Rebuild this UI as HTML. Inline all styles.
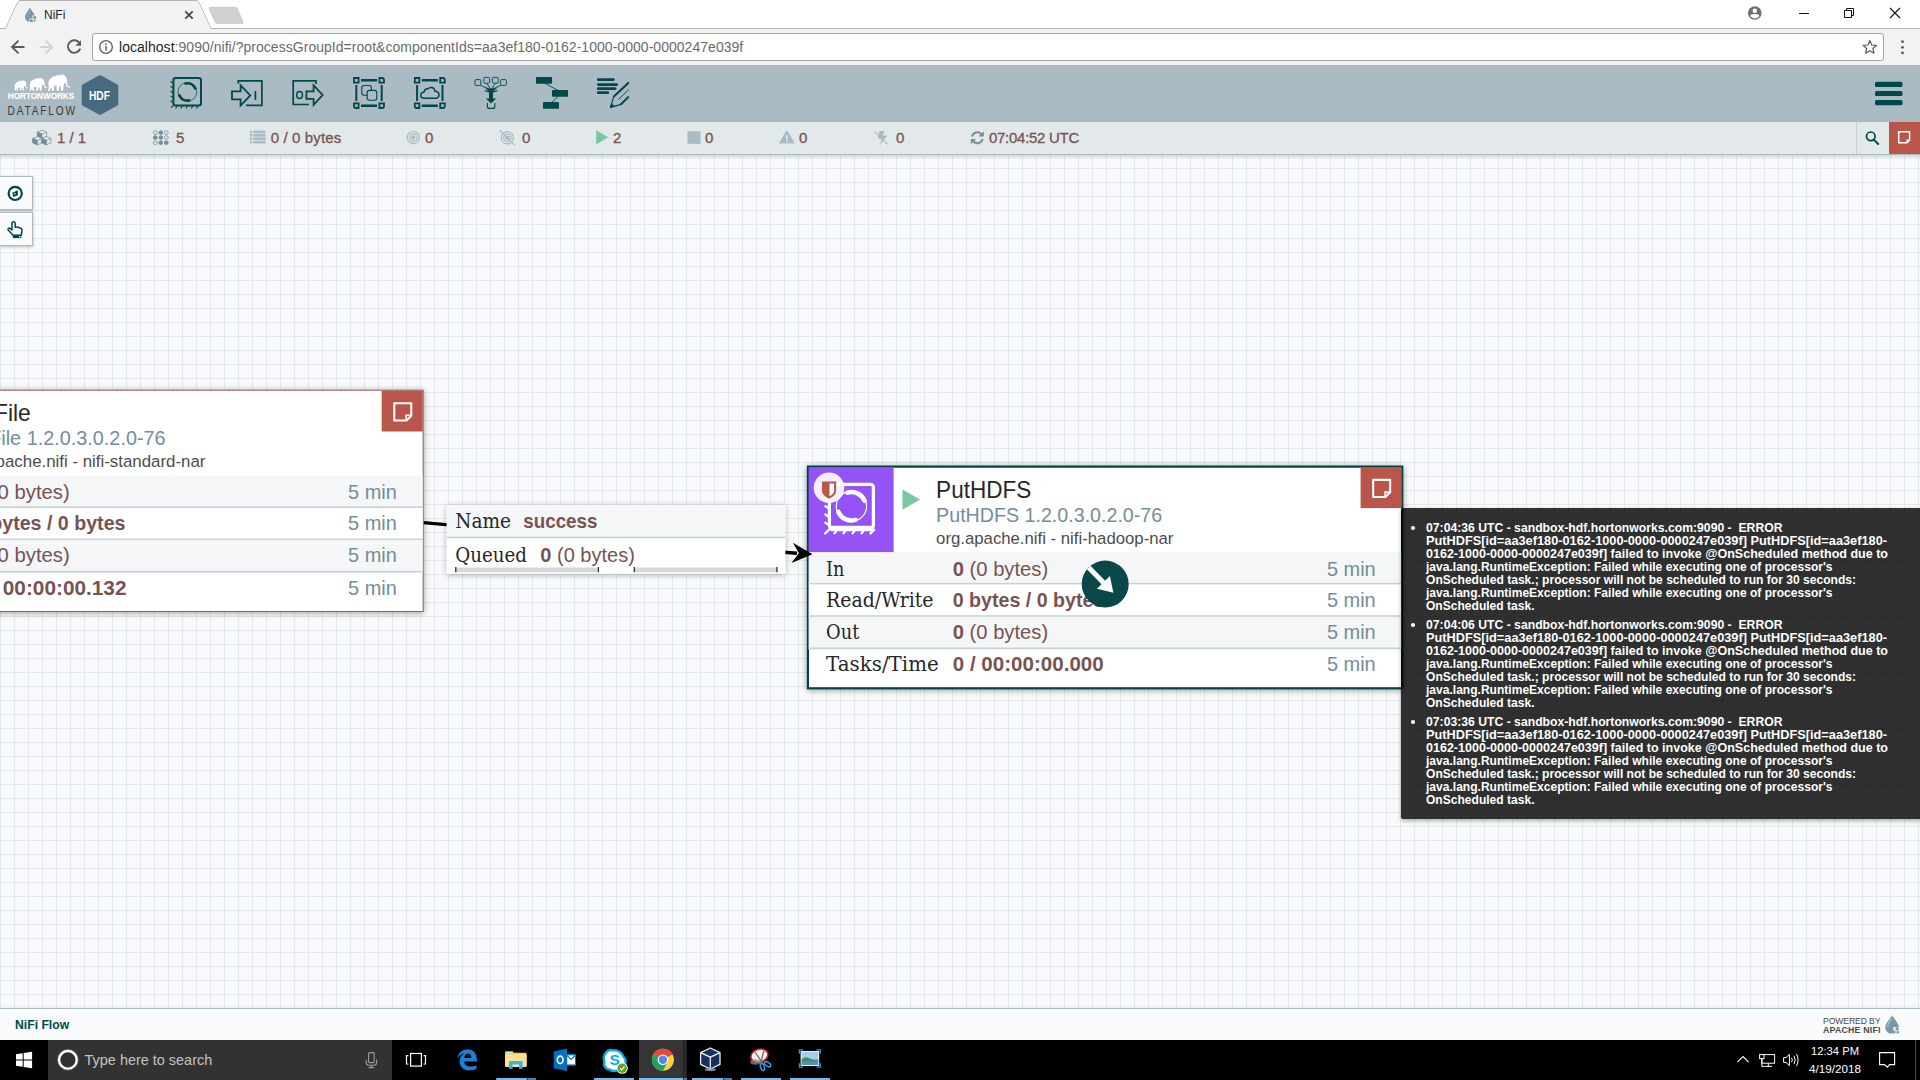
<!DOCTYPE html>
<html lang="en">
<head>
<meta charset="utf-8">
<title>NiFi</title>
<style>
*{box-sizing:border-box;margin:0;padding:0}
html,body{width:1920px;height:1080px;overflow:hidden;background:#fff;font-family:"Liberation Sans",sans-serif}
.abs{position:absolute}
#root{position:absolute;left:0;top:0;width:1920px;height:1080px;overflow:hidden}
/* browser chrome */
#titlebar{left:0;top:0;width:1920px;height:29px;background:#fff}
#toolbar{left:0;top:29px;width:1920px;height:37px;background:#f2f2f2;border-bottom:1px solid #b6b4b6}
#urlbox{left:92px;top:33px;width:1792px;height:28px;background:#fff;border:1px solid #a6a6a6;border-radius:3px}
#url{left:119px;top:39px;font-size:14px;line-height:16px;color:#6b6b6b;white-space:nowrap;letter-spacing:0.035px}
#url b{font-weight:normal;color:#1f1f1f}
#tabtitle{left:44px;top:7px;font-size:12px;line-height:16px;color:#1f1f1f}
/* nifi header */
#header{left:0;top:66px;width:1920px;height:56px;background:#aabbc3}
#status{left:0;top:122px;width:1920px;height:33px;background:#e3e8eb;border-bottom:1px solid #aabbc3}
.st{top:129px;font-size:15px;line-height:18px;color:#775351;white-space:nowrap;-webkit-text-stroke:0.3px #775351}
#canvas{left:0;top:155px;width:1920px;height:885px;background-color:#f9fafb;
 background-image:linear-gradient(to right,#e4e9ec 1px,transparent 1px),linear-gradient(to bottom,#e4e9ec 1px,transparent 1px);
 background-size:14px 14px;background-position:0 -1px}
#topshadow{left:0;top:155px;width:1920px;height:5px;background:linear-gradient(to bottom,rgba(0,0,0,.14),rgba(0,0,0,0))}
#crumbs{left:0;top:1008px;width:1920px;height:32px;background:rgba(249,250,251,.96);border-top:1px solid #aabbc3;box-shadow:0 -2px 4px rgba(0,0,0,.05)}
#crumbtxt{left:15px;top:1017px;font-size:12.2px;line-height:16px;font-weight:bold;color:#004849;white-space:nowrap}
#taskbar{left:0;top:1040px;width:1920px;height:40px;background:#000}
/* tooltip */
#tip{left:1401px;top:508px;width:521px;height:310.500px;background:rgba(0,0,0,.808);border-radius:2px;box-shadow:0 2px 4px rgba(0,0,0,.3)}
#tip ul{position:absolute;left:0;top:0;list-style:none}
#tip li{position:absolute;left:25px;width:480px;font-size:12.2px;line-height:13px;font-weight:bold;color:#fff;white-space:nowrap}
#tip li i{position:absolute;left:-15px;top:4px;width:5px;height:5px;border-radius:50%;background:#fff}
</style>
</head>
<body>
<div id="root">

<div id="titlebar" class="abs"></div>
<div id="toolbar" class="abs"></div>
<svg class="abs" style="left:0;top:0" width="1920" height="66" viewBox="0 0 1920 66">
 <path d="M0 28.5H5.5L18 1.6Q18.6 0.5 20 0.5H196.5Q197.9 0.5 198.5 1.6L211 28.5H1920" fill="none" stroke="#b3b1b3" stroke-width="1"/>
 <path d="M5.8 29L18.3 1.8Q18.8 1 20 1H196.5Q197.7 1 198.2 1.8L210.7 29Z" fill="#f2f2f2"/>
 <path d="M210.2 7.3H235.5Q236.6 7.3 237.1 8.3L242.9 21.6Q243.6 23.6 241.6 23.6H217Q215.8 23.6 215.3 22.6L209.2 9Q208.6 7.3 210.2 7.3Z" fill="#d0d0d0" stroke="#bdbdbd" stroke-width=".6"/>
 <path d="M185.3 11.3l7.4 7.4M192.7 11.3l-7.4 7.4" stroke="#454545" stroke-width="1.7" fill="none"/>
 <!-- favicon drop -->
 <path d="M29.800 7.400C32 11.500 34.800 13.600 35 16.800C35.200 19.800 33 21.800 30 21.800C27 21.800 24.800 19.700 25 16.800C25.300 13.400 28.200 11.200 29.800 7.400Z" fill="#7a97a6"/>
 <path d="M27 17.600C27.200 15 28.800 13.200 30 10.800" fill="none" stroke="#a9bcc6" stroke-width=".8"/>
 <path d="M32.400 15.600H37V23H29.400V18.600H32.400Z" fill="#f2f2f2"/>
 <rect x="33.200" y="16.200" width="2.900" height="2.700" fill="#7a97a6"/><rect x="30" y="19.300" width="2.800" height="2.700" fill="#7a97a6"/><path d="M33.800 19.800H36.400L34.600 22H33.800Z" fill="#7a97a6"/>
 <!-- nav arrows -->
 <path d="M24.5 47H12.5M18.5 40.6L12 47L18.5 53.4" stroke="#5a5a5a" stroke-width="1.9" fill="none"/>
 <path d="M39.5 47H51.5M45.5 40.6L52 47L45.5 53.4" stroke="#d2d2d2" stroke-width="1.9" fill="none"/>
 <path d="M79.6 43.2A6.3 6.3 0 1 0 80.2 48.6" stroke="#5a5a5a" stroke-width="1.9" fill="none"/>
 <path d="M81 40.2V45.8H75.4Z" fill="#5a5a5a"/>
 <!-- info icon -->
 <circle cx="106" cy="47" r="6.3" fill="none" stroke="#5a5a5a" stroke-width="1.3"/>
 <rect x="105.3" y="46" width="1.5" height="4.6" fill="#5a5a5a"/><rect x="105.3" y="43.3" width="1.5" height="1.6" fill="#5a5a5a"/>
 <!-- star -->
 <path d="M1869.8 40.6l1.9 4.4 4.8 .4-3.6 3.1 1.1 4.7-4.2-2.5-4.2 2.5 1.1-4.7-3.6-3.1 4.8-.4z" fill="none" stroke="#5a5a5a" stroke-width="1.2" stroke-linejoin="round"/>
 <circle cx="1902.5" cy="41.7" r="1.4" fill="#5a5a5a"/><circle cx="1902.5" cy="47.3" r="1.4" fill="#5a5a5a"/><circle cx="1902.5" cy="52.9" r="1.4" fill="#5a5a5a"/>
 <!-- window controls -->
 <circle cx="1754.8" cy="13" r="6.8" fill="#6f6f6f"/>
 <circle cx="1754.8" cy="10.8" r="2.3" fill="#fff"/>
 <path d="M1750.3 16.3Q1750.3 13.9 1754.8 13.9Q1759.3 13.9 1759.3 16.3Q1757.6 18.4 1754.8 18.4Q1752 18.4 1750.3 16.3Z" fill="#fff"/>
 <path d="M1799 13.5H1809" stroke="#111" stroke-width="1"/>
 <path d="M1844.5 10.5H1851.5V17.5H1844.5ZM1846.5 10.5V8.5H1853.5V15.5H1851.5" stroke="#111" stroke-width="1" fill="none"/>
 <path d="M1890 8L1900 18M1900 8L1890 18" stroke="#111" stroke-width="1.1"/>
</svg>
<div id="urlbox" class="abs"></div>
<svg class="abs" style="left:92px;top:33px" width="40" height="28" viewBox="92 33 40 28">
 <circle cx="106" cy="47" r="6.3" fill="none" stroke="#5a5a5a" stroke-width="1.3"/>
 <rect x="105.3" y="46" width="1.5" height="4.6" fill="#5a5a5a"/><rect x="105.3" y="43.3" width="1.5" height="1.6" fill="#5a5a5a"/>
</svg>
<svg class="abs" style="left:1855px;top:35px" width="28" height="24" viewBox="1855 35 28 24">
 <path d="M1869.8 40.6l1.9 4.4 4.8 .4-3.6 3.1 1.1 4.7-4.2-2.5-4.2 2.5 1.1-4.7-3.6-3.1 4.8-.4z" fill="none" stroke="#5a5a5a" stroke-width="1.2" stroke-linejoin="round"/>
</svg>
<div id="tabtitle" class="abs">NiFi</div>
<div id="url" class="abs"><b>localhost</b>:9090/nifi/?processGroupId=root&amp;componentIds=aa3ef180-0162-1000-0000-0000247e039f</div>


<div id="header" class="abs"></div>
<svg class="abs" style="left:0;top:65px" width="1920" height="57" viewBox="0 65 1920 57">
 <!-- hortonworks logo -->
 <defs>
  <path id="eleph" d="M3 45C3 25 12 12 30 7C40 3 50 2 58 3C62 0 72 0 78 6C85 12 86 22 87 32C88 42 89 50 93 52C96 53 99 51 100 53C99 58 92 60 88 56C83 50 82 42 80 36L76 38C74 42 72 46 71 50L69 72L60 72L59 56L53 50L50 72L41 72L40 51C35 51 30 50 27 49L29 72L20 72L17 56L10 72L2 72L6 52Z"/>
 </defs>
 <use href="#eleph" fill="#fff" transform="translate(14,80.4) scale(.141,.142)"/>
 <use href="#eleph" fill="#fff" transform="translate(29.1,77.9) scale(.178,.177)"/>
 <use href="#eleph" fill="#fff" transform="translate(47.6,74.6) scale(.224,.223)"/>
 <text x="7.8" y="98.5" font-family="Liberation Sans, sans-serif" font-weight="bold" font-size="8.200" fill="#fff" stroke="#fff" stroke-width=".15" textLength="66.400" lengthAdjust="spacingAndGlyphs">HORTONWORKS</text>
 <text x="0" y="0" font-family="Liberation Sans, sans-serif" font-size="13" fill="#3a3a3a" textLength="86.6" lengthAdjust="spacing" transform="translate(7.5,114.9) scale(.78,1)">DATAFLOW</text>
 <polygon points="100,77.5 116,86.3 116,103.7 100,112.5 84,103.7 84,86.3" fill="#466a80" stroke="#466a80" stroke-width="4.6" stroke-linejoin="round"/>
 <text x="88.9" y="99.8" font-family="Liberation Sans, sans-serif" font-weight="bold" font-size="13.5" fill="#fff" textLength="21" lengthAdjust="spacingAndGlyphs">HDF</text>
 
 <g fill="none" stroke="#004849" stroke-linecap="butt" stroke-linejoin="miter">
  <!-- processor -->
  <rect x="173.4" y="78.1" width="27.6" height="27.4" rx="2.2" stroke-width="2"/>
  <path d="M170.6 81.5l2 1.6M170.6 86.3l2 1.6M170.6 91.1l2 1.6M170.6 95.9l2 1.6M170.6 100.7l2 1.6M171 107.6l2.4-2.2M175.6 108.4l1.6-2.4M180.8 108.4l1.6-2.4M186 108.4l1.6-2.4M191.2 108.4l1.6-2.4M196.4 108.4l1.6-2.4" stroke-width="1.1"/>
  <circle cx="187.3" cy="91.9" r="9.4" stroke-width=".7"/>
  <path d="M185.500 83.500A8.600 8.600 0 0 1 195.200 88.300" stroke-width="2.800" stroke-linecap="round"/>
  <path d="M189.100 100.300A8.600 8.600 0 0 1 179.400 95.500" stroke-width="2.800" stroke-linecap="round"/>
  <!-- input port -->
  <path d="M238.3 83.6V80.9H261.9V105.4H246" stroke-width="1.7"/>
  <path d="M232 91.4H240.6V85.3L250.3 95.4L240.6 105.6V99.4H232Z" stroke-width="1.8" fill="#aabbc3"/>
  <path d="M255.4 91V100" stroke-width="1.7"/>
  <!-- output port -->
  <path d="M316 84V80.9H293.2V104.5H309" stroke-width="1.7"/>
  <ellipse cx="299.6" cy="95" rx="2.9" ry="3.5" stroke-width="1.5"/>
  <path d="M306.4 91.3H313.6V85.2L322.6 95L313.6 104.9V98.8H306.4Z" stroke-width="1.8" fill="#aabbc3"/>
  <!-- group -->
  <g id="frame">
   <path d="M354 78h4.6v4.6h-4.6zM379.4 78H382Q384 78 384 80v2.6h-4.6zM354 103.4h4.6V108H356Q354 108 354 106zM379.4 103.4H384V106Q384 108 382 108h-2.6z" stroke-width="1.8"/>
   <path d="M361 80.3h16M361 105.7h16" stroke-width="2.6"/>
   <path d="M356.3 85v16M381.7 85v16" stroke-width="2"/>
  </g>
  <rect x="361.8" y="85.5" width="9.6" height="9.8" rx="2.2" stroke-width="1.1"/>
  <rect x="367.2" y="90.4" width="9.6" height="9.8" rx="2.2" stroke-width="1.1" fill="#aabbc3"/>
  <!-- remote group -->
  <use href="#frame" x="60.8"/>
  <path d="M424.5 98.2Q420.8 98.2 420.8 95.2Q420.8 92.4 424 92Q424.6 88.6 428 88.8Q429.6 87 432 87.6Q434.6 88.2 435 91.2Q439 91.4 439 94.8Q439 98.2 435.4 98.2Z" stroke-width="1.5"/>
  <!-- funnel -->
  <g stroke-width=".9">
   <rect x="475" y="79.6" width="5.8" height="5.8" rx="1"/><rect x="483.8" y="77.4" width="5.8" height="5.8" rx="1"/><rect x="492.4" y="77.4" width="5.8" height="5.8" rx="1"/><rect x="500.6" y="79.6" width="5.8" height="5.8" rx="1"/>
   <path d="M480.6 85.4L488.2 88.6M486.8 83.2L489.8 88M495.2 83.2L492.4 88M500.8 85.4L493.8 88.6"/>
   <path d="M484.8 90.6Q491 93.6 497.4 90.6" stroke-width="1.1"/>
  </g>
  <path d="M485.2 88.2H497L493 91.6V98.6H496.2L491 103.6L485.8 98.6H489V91.6Z" fill="#004849" stroke="none"/>
  <path d="M487.4 103V106.4Q487.4 108.4 489.4 108.4H492.8Q494.8 108.4 494.8 106.4V103" stroke-width="1.1"/>
  <!-- template -->
  <g stroke="none" fill="#004849"><rect x="536" y="77" width="16" height="6.7" rx=".8"/><rect x="552" y="90.1" width="16" height="6.7" rx=".8"/><rect x="543" y="102" width="16" height="6.7" rx=".8"/></g>
  <path d="M545 83.4L558 90.4M558 96.6L552 102.2" stroke-width=".9"/>
  <!-- label -->
  <path d="M598.2 79.6H613.4M598.2 84.6H616.8M598.2 88.7H615.2M598.2 92.7H607.8" stroke-width="2.7" stroke-linecap="round"/>
  <path d="M628.8 82.4L613.6 96.8L610.6 107.2L620.6 104.6L628.8 96.6" stroke-width="1.2"/>
  <path d="M628.8 82.4L613.6 96.8" stroke-width="2"/>
  <path d="M628.8 96.6L620.6 104.6" stroke-width="2"/>
  <path d="M628.8 89.4L618.4 99.6" stroke-width=".9"/>
  <path d="M611.6 103.8L610.4 107.4L614.4 106.4Z" fill="#004849" stroke-width="1"/>
 </g>

 <!-- hamburger -->
 <rect x="1875" y="81.8" width="27.5" height="5.2" rx="1.6" fill="#004849"/>
 <rect x="1875" y="90.9" width="27.5" height="5.2" rx="1.6" fill="#004849"/>
 <rect x="1875" y="100" width="27.5" height="5.2" rx="1.6" fill="#004849"/>
</svg>


<div id="status" class="abs"></div>
<svg class="abs" style="left:0;top:122px" width="1920" height="33" viewBox="0 122 1920 33">
 <!-- cubes -->
 <g stroke="#728e9b" stroke-width=".7" stroke-linejoin="round">
  <path d="M42 130.2l4.6 1.9v4.4l-4.6 2.1-4.6-2.1v-4.4z" fill="#e3e8eb"/><path d="M37.4 132.1v4.4l4.6 2.1v-4.5z" fill="#728e9b"/><path d="M37.400 132.1L42 134.100L46.600 132.100" fill="none"/>
  <path d="M37.400 136.500l4.600 1.900v4.400l-4.600 2.100-4.600-2.100v-4.400z" fill="#e3e8eb"/><path d="M32.800 138.400v4.400l4.600 2.100v-4.500z" fill="#728e9b"/><path d="M32.800 138.400l4.600 2l4.600-2" fill="none"/>
  <path d="M46.400 136.500l4.600 1.900v4.400l-4.600 2.100-4.600-2.100v-4.400z" fill="#e3e8eb"/><path d="M41.800 138.400v4.400l4.600 2.100v-4.500z" fill="#728e9b"/><path d="M41.800 138.400l4.600 2l4.600-2" fill="none"/>
 </g>
 <!-- dots -->
 <g stroke="#728e9b" stroke-width=".8">
  <circle cx="155.300" cy="132.600" r="1.900" fill="none"/><circle cx="160.800" cy="132.600" r="1.900" fill="#728e9b"/><circle cx="166.300" cy="132.600" r="1.900" fill="none"/>
  <circle cx="155.300" cy="137.600" r="1.900" fill="#728e9b"/><circle cx="160.800" cy="137.600" r="1.900" fill="#728e9b"/><circle cx="166.300" cy="137.600" r="1.900" fill="none"/>
  <circle cx="155.300" cy="142.700" r="1.900" fill="none"/><circle cx="160.800" cy="142.700" r="1.900" fill="#728e9b"/><circle cx="166.300" cy="142.700" r="1.900" fill="#728e9b"/>
 </g>
 <!-- list -->
 <g fill="#aabbc3"><rect x="250" y="130.600" width="2.200" height="2.600"/><rect x="253.200" y="130.600" width="12.400" height="2.600"/><rect x="250" y="134" width="2.200" height="2.600"/><rect x="253.200" y="134" width="12.400" height="2.600"/><rect x="250" y="137.400" width="2.200" height="2.600"/><rect x="253.200" y="137.400" width="12.400" height="2.600"/><rect x="250" y="140.800" width="2.200" height="2.600"/><rect x="253.200" y="140.800" width="12.400" height="2.600"/></g>
 <!-- targets -->
 <g fill="none" stroke="#aabbc3" stroke-width="1.200"><circle cx="413.300" cy="137.600" r="6.100"/><circle cx="413.300" cy="137.600" r="3.700"/><circle cx="413.300" cy="137.600" r="1.500" fill="#aabbc3"/></g>
 <g fill="none" stroke="#aabbc3" stroke-width="1.200"><circle cx="507.300" cy="137.800" r="6.100"/><circle cx="507.300" cy="137.800" r="3.700"/><circle cx="507.300" cy="137.800" r="1.500" fill="#aabbc3"/><path d="M499.800 130.300L514.600 145" stroke-width="1.300"/></g>
 <path d="M596.200 130.200L608.300 137.300L596.200 144.400Z" fill="#7dc7a0"/>
 <rect x="687.500" y="131.300" width="13" height="12.500" fill="#aabbc3"/>
 <path d="M786.800 130.900Q787.500 130.900 787.900 131.600L794.300 142.400Q794.800 143.600 793.600 143.600H780Q778.800 143.600 779.300 142.400L785.700 131.600Q786.100 130.900 786.800 130.900Z" fill="#aabbc3"/>
 <rect x="786" y="135" width="1.700" height="4.600" fill="#e3e8eb"/><rect x="786" y="140.600" width="1.700" height="1.700" fill="#e3e8eb"/>
 <path d="M879.500 131H884.500L882.800 135.600H887.200L880 145L881.600 138.600H877.600Z" fill="#aabbc3"/>
 <path d="M874.300 131.600L887.600 144.300" stroke="#aabbc3" stroke-width="1.100"/>
 <!-- refresh -->
 <g fill="none" stroke="#728e9b" stroke-width="2"><path d="M972 136.500A5.400 5.400 0 0 1 981.200 134"/><path d="M982.600 139A5.400 5.400 0 0 1 973.400 141.500"/></g>
 <path d="M983.800 131.300V136.600H978.500Z" fill="#728e9b"/><path d="M970.800 144.200V138.900H976.100Z" fill="#728e9b"/>
 <!-- search + bulletin -->
 <rect x="1856" y="122" width="1" height="32" fill="#c7d2d7"/>
 <circle cx="1870.800" cy="136.300" r="4.300" fill="none" stroke="#004849" stroke-width="1.700"/><path d="M1873.800 139.600L1878.200 144" stroke="#004849" stroke-width="2" stroke-linecap="round"/>
 <rect x="1889" y="122" width="31" height="32" fill="#ba554a"/>
 <path d="M1898.700 131.700H1909.600V140.200L1907 142.800H1898.700Z" fill="none" stroke="#fff" stroke-width="1.500" stroke-linejoin="round"/><path d="M1909.600 140.200H1907V142.800" fill="none" stroke="#fff" stroke-width="1.200"/>
</svg>
<div class="abs st" style="left:57px">1 / 1</div>
<div class="abs st" style="left:176px">5</div>
<div class="abs st" style="left:270.800px;letter-spacing:.12px">0 / 0 bytes</div>
<div class="abs st" style="left:425px">0</div>
<div class="abs st" style="left:522px">0</div>
<div class="abs st" style="left:613px">2</div>
<div class="abs st" style="left:705px">0</div>
<div class="abs st" style="left:799px">0</div>
<div class="abs st" style="left:896px">0</div>
<div class="abs st" style="left:989px;letter-spacing:-.28px">07:04:52 UTC</div>

<!--CANVAS_START-->
<div id="canvas" class="abs"></div>
<svg class="abs" style="left:0;top:155px" width="1920" height="853" viewBox="0 155 1920 853">
 <defs>
  <filter id="ds" x="-10%" y="-10%" width="120%" height="130%"><feDropShadow dx="0" dy="0.600" stdDeviation="1.800" flood-color="#000" flood-opacity=".38"/></filter>
  <filter id="ds2" x="-10%" y="-20%" width="120%" height="150%"><feDropShadow dx="0" dy="0.600" stdDeviation="1.800" flood-color="#000" flood-opacity=".3"/></filter>
 </defs>

<path d="M423.500 522.600L616.500 540L797 553.200" fill="none" stroke="#000" stroke-width="3.400"/>
<g transform="translate(446.800,505.300) scale(1.7)">
 <rect x="0" y="0" width="199.100" height="40.300" fill="#fff" filter="url(#ds2)"/>
 <rect x="0" y="0" width="199.100" height="19" fill="#f4f6f7"/><rect x="0" y="18.400" width="199.100" height="1" fill="#c7d2d7"/>
 <text x="5" y="13.500" font-family="DejaVu Serif, Liberation Serif, serif" font-size="11.600" fill="#262626" textLength="32.800" lengthAdjust="spacingAndGlyphs">Name</text>
 <text x="45" y="13.500" font-family="Liberation Sans, sans-serif" font-size="12" font-weight="bold" fill="#775351" textLength="43.600" lengthAdjust="spacingAndGlyphs">success</text>
 <text x="5" y="33.100" font-family="DejaVu Serif, Liberation Serif, serif" font-size="11.600" fill="#262626" textLength="42.200" lengthAdjust="spacingAndGlyphs">Queued</text>
 <text x="55" y="33.100" font-family="Liberation Sans, sans-serif" font-size="12" fill="#775351" textLength="55.600" lengthAdjust="spacingAndGlyphs"><tspan font-weight="bold">0</tspan> (0 bytes)</text>
 <rect x="5" y="36.600" width="84.500" height="2.800" fill="#d8d8d8"/><rect x="110" y="36.600" width="84.500" height="2.800" fill="#d8d8d8"/>
 <path d="M5.300 36.300v3.100M89.200 36.300v3.100M110.300 36.300v3.100M194.200 36.300v3.100" stroke="#262626" stroke-width=".7"/>
</g>

<g transform="translate(-170.3,390.7) scale(1.7)">
<rect x="-0.3" y="-0.3" width="349.400" height="130.200" fill="#fff" stroke="#8e5b58" stroke-width=".6" filter="url(#ds)"/>
<rect x="0" y="50" width="348.800" height="19" fill="#f4f6f7"/><rect x="0" y="68" width="348.800" height="1" fill="#c7d2d7"/>
<rect x="0" y="69" width="348.800" height="19" fill="#fff"/><rect x="0" y="87" width="348.800" height="1" fill="#c7d2d7"/>
<rect x="0" y="88" width="348.800" height="19" fill="#f4f6f7"/><rect x="0" y="106" width="348.800" height="1" fill="#c7d2d7"/>
<rect x="324.700" y="0" width="24.100" height="24" fill="#ba554a"/>
<path d="M332.100 7.400H342.100V14.700L339.300 17.500H332.100Z" fill="none" stroke="#fff" stroke-width="1.200" stroke-linejoin="round"/><path d="M342.100 14.500H339.100V17.500" fill="none" stroke="#fff" stroke-width=".9"/>
<text x="75" y="18" font-family="Liberation Sans, sans-serif" font-size="14" fill="#262626" textLength="43.30" lengthAdjust="spacingAndGlyphs">GetFile</text>
<text x="75" y="32" font-family="Liberation Sans, sans-serif" font-size="12" fill="#728e9b" textLength="122.60" lengthAdjust="spacingAndGlyphs">GetFile 1.2.0.3.0.2.0-76</text>
<text x="75" y="45" font-family="Liberation Sans, sans-serif" font-size="10.100" fill="#4d4d4d" textLength="146.00" lengthAdjust="spacingAndGlyphs">org.apache.nifi - nifi-standard-nar</text>
<text x="10.3" y="64" font-family="DejaVu Serif, Liberation Serif, serif" font-size="11.6" fill="#262626" textLength="10.80" lengthAdjust="spacingAndGlyphs">In</text>
<text x="84.8" y="64" font-family="Liberation Sans, sans-serif" font-size="12" fill="#775351" textLength="56.40" lengthAdjust="spacingAndGlyphs"><tspan font-weight="bold">0</tspan> (0 bytes)</text>
<text x="304.900" y="64" font-family="Liberation Sans, sans-serif" font-size="12" fill="#728e9b" textLength="28.70" lengthAdjust="spacingAndGlyphs">5 min</text>
<text x="10.3" y="82" font-family="DejaVu Serif, Liberation Serif, serif" font-size="11.6" fill="#262626" textLength="63.20" lengthAdjust="spacingAndGlyphs">Read/Write</text>
<text x="84.8" y="82" font-family="Liberation Sans, sans-serif" font-size="12" fill="#775351" textLength="89.20" lengthAdjust="spacingAndGlyphs"><tspan font-weight="bold">0 bytes / 0 bytes</tspan></text>
<text x="304.900" y="82" font-family="Liberation Sans, sans-serif" font-size="12" fill="#728e9b" textLength="28.70" lengthAdjust="spacingAndGlyphs">5 min</text>
<text x="10.3" y="101" font-family="DejaVu Serif, Liberation Serif, serif" font-size="11.6" fill="#262626" textLength="19.60" lengthAdjust="spacingAndGlyphs">Out</text>
<text x="84.8" y="101" font-family="Liberation Sans, sans-serif" font-size="12" fill="#775351" textLength="56.40" lengthAdjust="spacingAndGlyphs"><tspan font-weight="bold">0</tspan> (0 bytes)</text>
<text x="304.900" y="101" font-family="Liberation Sans, sans-serif" font-size="12" fill="#728e9b" textLength="28.70" lengthAdjust="spacingAndGlyphs">5 min</text>
<text x="10.3" y="120" font-family="DejaVu Serif, Liberation Serif, serif" font-size="11.6" fill="#262626" textLength="66.20" lengthAdjust="spacingAndGlyphs">Tasks/Time</text>
<text x="84.8" y="120" font-family="Liberation Sans, sans-serif" font-size="12" fill="#775351" textLength="89.80" lengthAdjust="spacingAndGlyphs"><tspan font-weight="bold">1 / 00:00:00.132</tspan></text>
<text x="304.900" y="120" font-family="Liberation Sans, sans-serif" font-size="12" fill="#728e9b" textLength="28.70" lengthAdjust="spacingAndGlyphs">5 min</text>
</g>
<g transform="translate(808.6,467.3) scale(1.7)">
<rect x="-0.400" y="-0.400" width="349.600" height="130.400" fill="#fff" stroke="#004244" stroke-width="1.300" filter="url(#ds)"/>
<rect x="0" y="0" width="50" height="50" fill="#9452f7"/>
<rect x="0" y="50" width="348.800" height="19" fill="#f4f6f7"/><rect x="0" y="68" width="348.800" height="1" fill="#c7d2d7"/>
<rect x="0" y="69" width="348.800" height="19" fill="#fff"/><rect x="0" y="87" width="348.800" height="1" fill="#c7d2d7"/>
<rect x="0" y="88" width="348.800" height="19" fill="#f4f6f7"/><rect x="0" y="106" width="348.800" height="1" fill="#c7d2d7"/>
<rect x="324.700" y="0" width="24.100" height="24" fill="#ba554a"/>
<path d="M332.100 7.400H342.100V14.700L339.300 17.500H332.100Z" fill="none" stroke="#fff" stroke-width="1.200" stroke-linejoin="round"/><path d="M342.100 14.500H339.100V17.500" fill="none" stroke="#fff" stroke-width=".9"/>
<text x="75" y="18" font-family="Liberation Sans, sans-serif" font-size="14" fill="#262626" textLength="56.00" lengthAdjust="spacingAndGlyphs">PutHDFS</text>
<text x="75" y="32" font-family="Liberation Sans, sans-serif" font-size="12" fill="#728e9b" textLength="133.00" lengthAdjust="spacingAndGlyphs">PutHDFS 1.2.0.3.0.2.0-76</text>
<text x="75" y="45" font-family="Liberation Sans, sans-serif" font-size="10.100" fill="#4d4d4d" textLength="139.60" lengthAdjust="spacingAndGlyphs">org.apache.nifi - nifi-hadoop-nar</text>
<text x="10.3" y="64" font-family="DejaVu Serif, Liberation Serif, serif" font-size="11.6" fill="#262626" textLength="10.80" lengthAdjust="spacingAndGlyphs">In</text>
<text x="84.8" y="64" font-family="Liberation Sans, sans-serif" font-size="12" fill="#775351" textLength="56.10" lengthAdjust="spacingAndGlyphs"><tspan font-weight="bold">0</tspan> (0 bytes)</text>
<text x="304.900" y="64" font-family="Liberation Sans, sans-serif" font-size="12" fill="#728e9b" textLength="28.70" lengthAdjust="spacingAndGlyphs">5 min</text>
<text x="10.3" y="82" font-family="DejaVu Serif, Liberation Serif, serif" font-size="11.6" fill="#262626" textLength="63.20" lengthAdjust="spacingAndGlyphs">Read/Write</text>
<text x="84.8" y="82" font-family="Liberation Sans, sans-serif" font-size="12" fill="#775351" textLength="89.20" lengthAdjust="spacingAndGlyphs"><tspan font-weight="bold">0 bytes / 0 bytes</tspan></text>
<text x="304.900" y="82" font-family="Liberation Sans, sans-serif" font-size="12" fill="#728e9b" textLength="28.70" lengthAdjust="spacingAndGlyphs">5 min</text>
<text x="10.3" y="101" font-family="DejaVu Serif, Liberation Serif, serif" font-size="11.6" fill="#262626" textLength="19.60" lengthAdjust="spacingAndGlyphs">Out</text>
<text x="84.8" y="101" font-family="Liberation Sans, sans-serif" font-size="12" fill="#775351" textLength="56.10" lengthAdjust="spacingAndGlyphs"><tspan font-weight="bold">0</tspan> (0 bytes)</text>
<text x="304.900" y="101" font-family="Liberation Sans, sans-serif" font-size="12" fill="#728e9b" textLength="28.70" lengthAdjust="spacingAndGlyphs">5 min</text>
<text x="10.3" y="120" font-family="DejaVu Serif, Liberation Serif, serif" font-size="11.6" fill="#262626" textLength="66.20" lengthAdjust="spacingAndGlyphs">Tasks/Time</text>
<text x="84.8" y="120" font-family="Liberation Sans, sans-serif" font-size="12" fill="#775351" textLength="88.80" lengthAdjust="spacingAndGlyphs"><tspan font-weight="bold">0 / 00:00:00.000</tspan></text>
<text x="304.900" y="120" font-family="Liberation Sans, sans-serif" font-size="12" fill="#728e9b" textLength="28.70" lengthAdjust="spacingAndGlyphs">5 min</text>
</g>

<g transform="translate(808.6,467.3) scale(1.7)">
 <!-- processor glyph -->
 <g fill="none" stroke="#fff">
  <rect x="12.250" y="10" width="25.850" height="26" rx="1.800" stroke-width="1.900"/>
  <path d="M13 36H37.400" stroke-width="3.200"/>
  <path d="M9.400 17.600l2.400 1.700M9.400 22.500l2.400 1.700M9.400 27.400l2.400 1.700M9.400 32.300l2.400 1.700M9.300 39.300l3.400-3.200M14.900 39.300l2-2.600M20.200 39.300l2-2.600M25.500 39.300l2-2.600M30.800 39.300l2-2.600M36 39.300l3-3" stroke-width="1.300"/>
  <circle cx="25.200" cy="22.900" r="8.900" stroke-width=".7"/>
  <path d="M22.800 14.900A8.300 8.300 0 0 1 32.900 19.600" stroke-width="2.700" stroke-linecap="round"/>
  <path d="M27.600 30.900A8.300 8.300 0 0 1 17.500 26.200" stroke-width="2.700" stroke-linecap="round"/>
 </g>
 <circle cx="12" cy="12" r="9" fill="#fff" fill-opacity=".9"/>
 <path d="M7.900 8.300H16.200V13.800Q16.200 16.600 12.050 18.500Q7.900 16.600 7.900 13.800Z" fill="#ba554a"/>
 <path d="M12.300 9.500H15V13.700Q15 15.600 12.300 17.100Z" fill="#fff"/>
 <path d="M55.200 13L65.600 19L55.200 25Z" fill="#7dc7a0"/>
</g>
<circle cx="1105.200" cy="584.100" r="23.500" fill="#0a4748"/>
<clipPath id="cc"><circle cx="1105.200" cy="584.100" r="23.500"/></clipPath>
<path d="M1086 564.700L1103.600 582.700" stroke="#fbfcfc" stroke-width="5" clip-path="url(#cc)"/>
<path d="M1109.900 575.900L1113.400 592.800L1096.900 588.700Z" fill="#fbfcfc"/>

<path d="M0 0L-20.400 -10.200L-13.600 0L-20.400 10.200Z" fill="#000" transform="translate(812.500,554.300) rotate(4.100)"/>
</svg>
<div id="topshadow" class="abs"></div>

<div class="abs" style="left:-1px;top:176px;width:34px;height:34px;background:#f9fafb;border:1px solid #aabbc3;box-shadow:0 1px 3px rgba(0,0,0,.25)"></div>
<div class="abs" style="left:-1px;top:212px;width:34px;height:34px;background:#f9fafb;border:1px solid #aabbc3;box-shadow:0 1px 3px rgba(0,0,0,.25)"></div>
<svg class="abs" style="left:0;top:176px" width="34" height="70" viewBox="0 176 34 70">
 <circle cx="15.200" cy="193.400" r="6.600" fill="none" stroke="#004849" stroke-width="2.200"/>
 <path d="M12.300 192.700L17.900 190.300V195.300L13.300 196.900Z" fill="#004849"/><path d="M14.200 192.900L16.300 193.700L14.200 194.700Z" fill="#f9fafb"/>
 <path d="M12 223.400Q12 221.700 13.600 221.700Q15.200 221.700 15.200 223.400V227.300Q16.400 226.500 17.500 227.300Q18.600 227 19.500 228Q20.800 227.800 21.600 229Q22.300 230 21.900 232L21.100 235.300H13.200Q11.500 233.600 8.400 230.300Q7.500 229.300 8.300 228.500Q9.200 227.700 10.300 228.600L12 230Z" fill="#f9fafb" stroke="#004849" stroke-width="1.500" stroke-linejoin="round"/>
 <rect x="12.900" y="235.200" width="8.400" height="2.900" fill="#004849"/><rect x="19" y="236" width="1.400" height="1.300" fill="#f9fafb"/>
</svg>

<!--CANVAS_END-->
<div id="tip" class="abs"></div>
<svg class="abs" style="left:1401px;top:509px" width="519" height="309" viewBox="1401 509 519 309" font-family="Liberation Sans, sans-serif" font-size="12.600" font-weight="bold" fill="#fff">
<circle cx="1413" cy="528.0" r="2.100"/>
<text x="1426" y="532" textLength="356.5" lengthAdjust="spacingAndGlyphs" xml:space="preserve">07:04:36 UTC - sandbox-hdf.hortonworks.com:9090 -  ERROR</text>
<text x="1426" y="545" textLength="461" lengthAdjust="spacingAndGlyphs" xml:space="preserve">PutHDFS[id=aa3ef180-0162-1000-0000-0000247e039f] PutHDFS[id=aa3ef180-</text>
<text x="1426" y="558" textLength="462" lengthAdjust="spacingAndGlyphs" xml:space="preserve">0162-1000-0000-0000247e039f] failed to invoke @OnScheduled method due to</text>
<text x="1426" y="571" textLength="406.5" lengthAdjust="spacingAndGlyphs" xml:space="preserve">java.lang.RuntimeException: Failed while executing one of processor&#39;s</text>
<text x="1426" y="584" textLength="430" lengthAdjust="spacingAndGlyphs" xml:space="preserve">OnScheduled task.; processor will not be scheduled to run for 30 seconds:</text>
<text x="1426" y="597" textLength="406.5" lengthAdjust="spacingAndGlyphs" xml:space="preserve">java.lang.RuntimeException: Failed while executing one of processor&#39;s</text>
<text x="1426" y="610" textLength="108.5" lengthAdjust="spacingAndGlyphs" xml:space="preserve">OnScheduled task.</text>
<circle cx="1413" cy="625.0" r="2.100"/>
<text x="1426" y="629" textLength="356.5" lengthAdjust="spacingAndGlyphs" xml:space="preserve">07:04:06 UTC - sandbox-hdf.hortonworks.com:9090 -  ERROR</text>
<text x="1426" y="642" textLength="461" lengthAdjust="spacingAndGlyphs" xml:space="preserve">PutHDFS[id=aa3ef180-0162-1000-0000-0000247e039f] PutHDFS[id=aa3ef180-</text>
<text x="1426" y="655" textLength="462" lengthAdjust="spacingAndGlyphs" xml:space="preserve">0162-1000-0000-0000247e039f] failed to invoke @OnScheduled method due to</text>
<text x="1426" y="668" textLength="406.5" lengthAdjust="spacingAndGlyphs" xml:space="preserve">java.lang.RuntimeException: Failed while executing one of processor&#39;s</text>
<text x="1426" y="681" textLength="430" lengthAdjust="spacingAndGlyphs" xml:space="preserve">OnScheduled task.; processor will not be scheduled to run for 30 seconds:</text>
<text x="1426" y="694" textLength="406.5" lengthAdjust="spacingAndGlyphs" xml:space="preserve">java.lang.RuntimeException: Failed while executing one of processor&#39;s</text>
<text x="1426" y="707" textLength="108.5" lengthAdjust="spacingAndGlyphs" xml:space="preserve">OnScheduled task.</text>
<circle cx="1413" cy="722.0" r="2.100"/>
<text x="1426" y="726" textLength="356.5" lengthAdjust="spacingAndGlyphs" xml:space="preserve">07:03:36 UTC - sandbox-hdf.hortonworks.com:9090 -  ERROR</text>
<text x="1426" y="739" textLength="461" lengthAdjust="spacingAndGlyphs" xml:space="preserve">PutHDFS[id=aa3ef180-0162-1000-0000-0000247e039f] PutHDFS[id=aa3ef180-</text>
<text x="1426" y="752" textLength="462" lengthAdjust="spacingAndGlyphs" xml:space="preserve">0162-1000-0000-0000247e039f] failed to invoke @OnScheduled method due to</text>
<text x="1426" y="765" textLength="406.5" lengthAdjust="spacingAndGlyphs" xml:space="preserve">java.lang.RuntimeException: Failed while executing one of processor&#39;s</text>
<text x="1426" y="778" textLength="430" lengthAdjust="spacingAndGlyphs" xml:space="preserve">OnScheduled task.; processor will not be scheduled to run for 30 seconds:</text>
<text x="1426" y="791" textLength="406.5" lengthAdjust="spacingAndGlyphs" xml:space="preserve">java.lang.RuntimeException: Failed while executing one of processor&#39;s</text>
<text x="1426" y="804" textLength="108.5" lengthAdjust="spacingAndGlyphs" xml:space="preserve">OnScheduled task.</text>
</svg>

<div id="crumbs" class="abs"></div>
<div id="crumbtxt" class="abs">NiFi Flow</div>
<svg class="abs" style="left:1800px;top:1009px" width="120" height="31" viewBox="1800 1009 120 31">
 <text x="1823" y="1024" font-family="Liberation Sans, sans-serif" font-size="8.600" fill="#4a4a4a" textLength="57.500" lengthAdjust="spacing">POWERED BY</text>
 <text x="1823" y="1033" font-family="Liberation Sans, sans-serif" font-size="8.800" font-weight="bold" fill="#4a4a4a" textLength="57.500" lengthAdjust="spacing">APACHE NIFI</text>
 <path d="M1892 1015.200C1894.800 1020 1898.600 1022.800 1898.800 1027C1899 1031 1896 1033.600 1892 1033.600C1888 1033.600 1885.200 1031 1885.400 1027C1885.600 1022.600 1889.800 1020 1892 1015.200Z" fill="#7a97a6"/>
 <path d="M1887.600 1027C1887.800 1024 1889.800 1021.600 1891.400 1019" fill="none" stroke="#c3d0d6" stroke-width=".9"/>
 <rect x="1893.400" y="1027" width="6.600" height="7" fill="#f9fafb"/>
 <rect x="1895.600" y="1027.400" width="3" height="3" fill="#7a97a6"/><rect x="1892.600" y="1030.600" width="2.800" height="2.800" fill="#7a97a6"/><rect x="1896.600" y="1031.200" width="2.400" height="2.200" fill="#7a97a6"/>
</svg>
<div id="taskbar" class="abs"></div>

<svg class="abs" style="left:0;top:1040px" width="1920" height="40" viewBox="0 1040 1920 40">
 <rect x="48" y="1040" width="344" height="40" fill="#323232"/>
 <!-- windows logo -->
 <path d="M16 1054.200L22.700 1053.200V1059.500H16ZM23.700 1053.100L32.100 1051.800V1059.500H23.700ZM16 1060.500H22.700V1066.800L16 1065.800ZM23.700 1060.500H32.100V1068.200L23.700 1066.900Z" fill="#fff"/>
 <circle cx="67.900" cy="1059.800" r="8.800" fill="none" stroke="#fff" stroke-width="2.400"/>
 <circle cx="67.900" cy="1059.800" r="10.300" fill="none" stroke="#fff" stroke-opacity=".35" stroke-width=".9"/>
 <text x="84.600" y="1065.200" font-family="Liberation Sans, sans-serif" font-size="14.800" fill="#c4c4c4" textLength="127.600" lengthAdjust="spacingAndGlyphs">Type here to search</text>
 <!-- mic -->
 <g fill="none" stroke="#9b9b9b" stroke-width="1.100"><rect x="368.600" y="1052.600" width="5.600" height="10" rx="1"/><path d="M366.200 1059.600V1062.400Q366.200 1065.200 369 1065.200H373.800Q376.600 1065.200 376.600 1062.400V1059.600M371.400 1065.200V1067.600M368.600 1067.600H374.200"/></g>
 <!-- task view -->
 <g fill="none" stroke="#fff" stroke-width="1.200"><rect x="410.600" y="1053.500" width="10.800" height="12.600"/><path d="M408.400 1055.600H406.500V1064H408.400M423.600 1055.600H425.500V1064H423.600"/></g>
 <!-- edge -->
 <path d="M457.600 1058.200C458.200 1052.800 462.400 1049.200 467.400 1049.200C473.400 1049.200 477 1053.400 476.800 1059.600V1061.600H464.200C464.400 1065.200 467.200 1066.600 470.400 1066.600C472.800 1066.600 474.800 1066 476.400 1065V1068.800C474.600 1069.800 472.200 1070.400 469.400 1070.400C463.400 1070.400 459.600 1066.800 459.600 1061.200C459.600 1057.600 461.600 1054.800 464.600 1053.400C461.600 1053.800 459 1055.600 457.600 1058.200ZM464.400 1058H471.400C471.400 1055.200 470 1053.600 467.800 1053.600C465.800 1053.600 464.600 1055.400 464.400 1058Z" fill="#1b80d6"/>
 <!-- explorer -->
 <path d="M505 1052.400Q505 1051.200 506.200 1051.200H512.600L514 1052.800H525.400Q526.600 1052.800 526.600 1054V1066H505Z" fill="#f4c95f"/>
 <rect x="505" y="1054.200" width="21.600" height="12.800" rx=".8" fill="#fbe293"/>
 <path d="M509 1068.800V1062.400Q509 1061 510.400 1061H521.200Q522.600 1061 522.600 1062.400V1068.800H519V1064.400H512.600V1068.800Z" fill="#3eb2e8"/>
 <rect x="506.600" y="1052" width="4.600" height="1.200" fill="#cfe9f7"/>
 <!-- outlook -->
 <path d="M553.800 1051.400L567 1048.600V1071L553.800 1068.200Z" fill="#0072c6"/>
 <rect x="566" y="1054" width="10" height="11.800" fill="#0072c6"/>
 <path d="M567.200 1055.400H575V1064.400H567.200Z" fill="#fff"/><path d="M567.200 1055.600L571.100 1059.400L575 1055.600" fill="none" stroke="#0072c6" stroke-width="1.300"/>
 <ellipse cx="560.200" cy="1059.800" rx="2.900" ry="3.700" fill="none" stroke="#fff" stroke-width="1.600"/>
 <!-- skype -->
 <path d="M606 1052.600A6 6 0 0 1 613 1050.400A9.600 9.600 0 0 1 623.600 1056.800A6 6 0 0 1 622.800 1066.400A9.600 9.600 0 0 1 609.800 1069.600A6 6 0 0 1 604.400 1061.600A9.600 9.600 0 0 1 606 1052.600Z" fill="#fff" stroke="#00aff0" stroke-width="2.400"/>
 <text x="609.400" y="1065.400" font-family="Liberation Sans, sans-serif" font-weight="bold" font-size="15.500" fill="#00aff0">S</text>
 <circle cx="622.200" cy="1068.200" r="5.600" fill="#fff"/><circle cx="622.200" cy="1068.200" r="4.700" fill="#5da423"/>
 <path d="M619.900 1068.300L621.500 1069.900L624.500 1066.500" fill="none" stroke="#fff" stroke-width="1.200"/>
 <!-- chrome -->
 <rect x="639" y="1040" width="44.200" height="40" fill="#353535"/><rect x="683.200" y="1040" width="3.600" height="40" fill="#2a2a2a"/>
 <circle cx="662.900" cy="1059.800" r="11" fill="#fdd23e"/>
 <path d="M662.900 1059.800L653.370 1054.300A11 11 0 0 1 672.430 1054.300Z" fill="#e04a3b"/>
 <path d="M653.370 1054.300A11 11 0 0 1 672.430 1054.300L662.900 1054.300Z" fill="#e04a3b"/>
 <path d="M653.370 1054.300A11 11 0 0 0 662.900 1070.800L667.400 1062.400L658.400 1062.400Z" fill="#1fa05c"/>
 <path d="M653.370 1054.300L658.600 1063L662.900 1059.800Z" fill="#1fa05c"/>
 <circle cx="662.900" cy="1059.800" r="5.300" fill="#fff"/><circle cx="662.900" cy="1059.800" r="4.200" fill="#4b8bf5"/>
 <!-- virtualbox -->
 <path d="M710.300 1048L720 1052.600V1064.400L710.300 1069L700.600 1064.400V1052.600Z" fill="#17305e" stroke="#e8edf6" stroke-width="1.300" stroke-linejoin="round"/>
 <path d="M700.600 1052.600L710.300 1057.200L720 1052.600M710.300 1057.200V1069" fill="none" stroke="#e8edf6" stroke-width="1.300"/>
 <ellipse cx="710.300" cy="1069.600" rx="5.600" ry="1.500" fill="#9aa7c6" fill-opacity=".8"/>
 <!-- snipping -->
 <ellipse cx="759.400" cy="1055.600" rx="8.600" ry="6.400" fill="#f2f2f2" stroke="#d8242a" stroke-width="1.500" transform="rotate(-18 759.400 1055.600)"/>
 <ellipse cx="755.600" cy="1062" rx="5.600" ry="2.800" fill="#8d8d8d" fill-opacity=".7"/>
 <path d="M754.400 1051L763 1063.600M763.800 1050.600L760.600 1063.400" stroke="#6b6b6b" stroke-width="1.300"/>
 <ellipse cx="762.400" cy="1067" rx="1.900" ry="3.600" fill="none" stroke="#2fa4e7" stroke-width="1.400" transform="rotate(-18 762.400 1067)"/>
 <ellipse cx="767.600" cy="1064.200" rx="1.900" ry="3.600" fill="none" stroke="#2fa4e7" stroke-width="1.400" transform="rotate(-55 767.600 1064.200)"/>
 <!-- photos -->
 <path d="M798.800 1049.200H803.400V1050.400H800V1053.800H798.800ZM821 1049.200V1053.800H819.800V1050.400H816.400V1049.200ZM798.800 1067.800V1063.200H800V1066.600H803.400V1067.800ZM821 1067.800H816.400V1066.600H819.800V1063.200H821Z" fill="#3d8fd8"/>
 <rect x="800.600" y="1051" width="18.600" height="15" fill="#e9eef2"/>
 <rect x="801.600" y="1052" width="16.600" height="13" fill="#9fd0ee"/>
 <path d="M801.600 1059.400Q805.600 1055.400 809.600 1058.600Q814 1060.200 818.200 1059.600V1062H801.600Z" fill="#4c8a63"/>
 <path d="M801.600 1061.600H818.200V1065H801.600Z" fill="#4f93c2"/>
 <!-- underlines -->
 <g fill="#76b9ed">
  <rect x="496.200" y="1078" width="30.600" height="2"/><rect x="594" y="1078" width="40" height="2"/><rect x="639" y="1078" width="44.200" height="2"/>
  <rect x="692" y="1078" width="31" height="2"/><rect x="741" y="1078" width="40" height="2"/><rect x="790" y="1078" width="40" height="2"/>
 </g>
 <g fill="#4d7fae"><rect x="527.400" y="1078" width="8.600" height="2"/><rect x="684" y="1078" width="2.800" height="2"/><rect x="723.600" y="1078" width="8.400" height="2"/></g>
 <!-- tray -->
 <path d="M1737.400 1062.200L1743 1056.600L1748.600 1062.200" fill="none" stroke="#fff" stroke-width="1.100"/>
 <g fill="none" stroke="#fff" stroke-width="1"><rect x="1762" y="1054.600" width="12.600" height="8.600"/><path d="M1768.300 1063.200V1066.400M1764.600 1066.400H1772"/><rect x="1759.600" y="1054.600" width="4.400" height="4" fill="#000"/><path d="M1761.800 1058.600V1066.400H1764.600"/></g>
 <g fill="none" stroke="#fff" stroke-width="1"><path d="M1783.600 1057.600H1786L1789.400 1054.400V1065.600L1786 1062.400H1783.600Z"/><path d="M1791.600 1057.800Q1793 1060 1791.600 1062.200M1794 1055.800Q1796.400 1060 1794 1064.200M1796.400 1053.800Q1799.800 1060 1796.400 1066.200"/></g>
 <text x="1811" y="1055.400" font-family="Liberation Sans, sans-serif" font-size="11.600" fill="#fff" textLength="48" lengthAdjust="spacingAndGlyphs">12:34 PM</text>
 <text x="1809" y="1073.400" font-family="Liberation Sans, sans-serif" font-size="11.600" fill="#fff" textLength="52" lengthAdjust="spacingAndGlyphs">4/19/2018</text>
 <path d="M1879.600 1052.600H1894.600V1064.600H1889.600L1887.100 1067.100L1884.600 1064.600H1879.600Z" fill="none" stroke="#fff" stroke-width="1.100"/>
 <rect x="1915" y="1040" width="1" height="40" fill="#4a4a4a"/>
</svg>


</div>
</body>
</html>
